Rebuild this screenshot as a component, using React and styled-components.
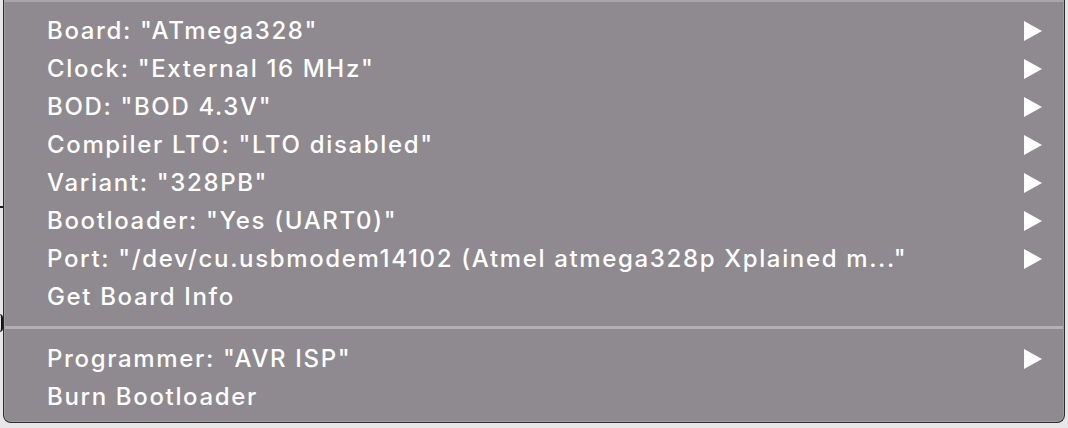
import React from "react";
import styled, { createGlobalStyle } from "styled-components";

const Global = createGlobalStyle`
  html, body { margin: 0; padding: 0; background: #e7e7e7; }
  body { font-family: Inter, "Noto Sans", "Liberation Sans", sans-serif; }
`;

const Page = styled.div`
  display: flex;
  align-items: flex-start;
  width: 1068px;
  height: 428px;
  overflow: hidden;
`;

const Backdrop = styled.div`
  width: 3px;
  flex: none;
  display: flex;
  flex-direction: column;
  padding-top: 206px;
  overflow: hidden;
`;

const BackRule = styled.div`
  height: 2px;
  background: #1a1a1a;
`;

const BackArc = styled.div`
  margin-top: 106px;
  width: 2px;
  height: 18px;
  border-right: 2px solid #141414;
  border-radius: 0 9px 9px 0;
  margin-left: -1px;
`;

const Menu = styled.div`
  width: 1060px;
  flex: none;
  background: #8e8a8f;
  border: 1px solid #2c2b2d;
  border-top: none;
  border-radius: 0 0 8px 8px;
  box-shadow: inset 0 0 0 1px rgba(255, 255, 255, 0.16);
  display: flex;
  flex-direction: column;
  padding-bottom: 6px;
`;

const TopEdge = styled.div`
  height: 2px;
  background: #a9a6ab;
  margin-bottom: 10px;
`;

const Item = styled.div`
  height: 38px;
  display: flex;
  align-items: center;
  justify-content: space-between;
  padding: 0 22px 0 43px;
  color: #ffffff;
  font-size: 24px;
  font-weight: 500;
  letter-spacing: 1.65px;
  white-space: nowrap;
`;

const Label = styled.span`
  display: block;
  transform: translateY(-1px);
`;

const Separator = styled.div`
  height: 3px;
  margin: 10px 1px 11px 1px;
  background: #b3afb4;
`;

const Arrow = () => (
  <svg width="18" height="20" viewBox="0 0 18 20" aria-hidden="true">
    <path d="M0 0 L18 10 L0 20 Z" fill="#ffffff" />
  </svg>
);

const groups = [
  [
    { label: 'Board: "ATmega328"', sub: true },
    { label: 'Clock: "External 16 MHz"', sub: true },
    { label: 'BOD: "BOD 4.3V"', sub: true },
    { label: 'Compiler LTO: "LTO disabled"', sub: true },
    { label: 'Variant: "328PB"', sub: true },
    { label: 'Bootloader: "Yes (UART0)"', sub: true },
    { label: 'Port: "/dev/cu.usbmodem14102 (Atmel atmega328p Xplained m..."', sub: true },
    { label: "Get Board Info", sub: false },
  ],
  [
    { label: 'Programmer: "AVR ISP"', sub: true },
    { label: "Burn Bootloader", sub: false },
  ],
];

export default function App() {
  return (
    <>
      <Global />
      <Page>
        <Backdrop>
          <BackRule />
          <BackArc />
        </Backdrop>
        <Menu>
          <TopEdge />
          {groups.map((g, gi) => (
            <React.Fragment key={gi}>
              {gi > 0 && <Separator />}
              {g.map((it) => (
                <Item key={it.label}>
                  <Label>{it.label}</Label>
                  {it.sub && <Arrow />}
                </Item>
              ))}
            </React.Fragment>
          ))}
        </Menu>
      </Page>
    </>
  );
}
